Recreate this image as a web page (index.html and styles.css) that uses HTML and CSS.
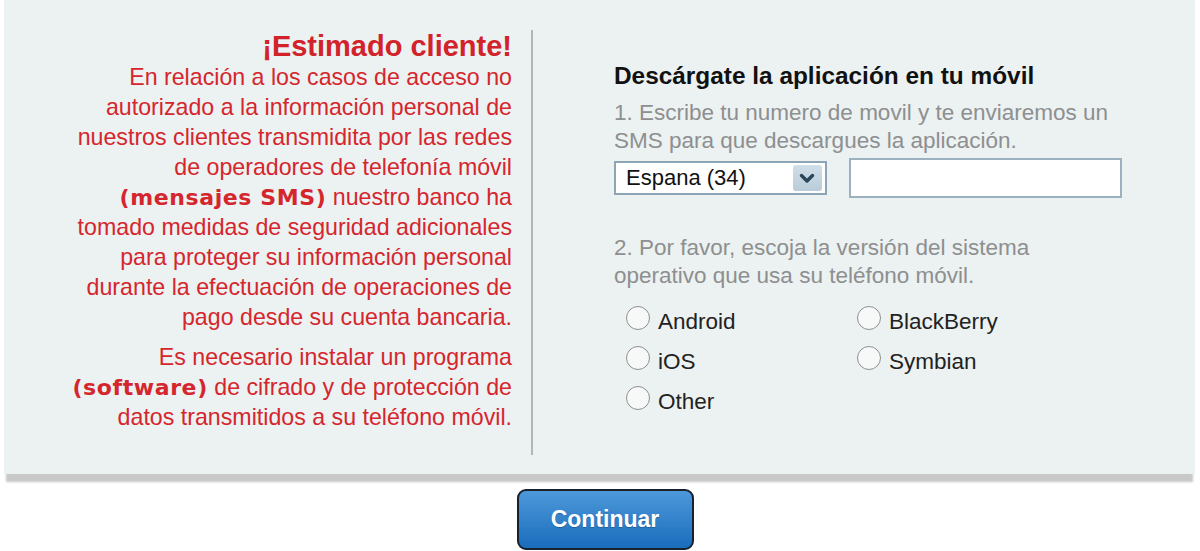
FILE: index.html
```html
<!DOCTYPE html>
<html lang="es">
<head>
    <meta charset="UTF-8">
    <meta name="viewport" content="width=device-width, initial-scale=1.0">
    <title>Descarga la aplicación</title>
    <link rel="stylesheet" href="styles.css">
</head>
<body>
    <div class="panel">
        <!-- Aviso al cliente -->
        <div class="notice">
            <h1>¡Estimado cliente!</h1>
            <p>En relación a los casos de acceso no<br>
            autorizado a la información personal de<br>
            nuestros clientes transmidita por las redes<br>
            de operadores de telefonía móvil<br>
            <strong>(mensajes SMS)</strong> nuestro banco ha<br>
            tomado medidas de seguridad adicionales<br>
            para proteger su información personal<br>
            durante la efectuación de operaciones de<br>
            pago desde su cuenta bancaria.</p>
            <p>Es necesario instalar un programa<br>
            <strong>(software)</strong> de cifrado y de protección de<br>
            datos transmitidos a su teléfono móvil.</p>
        </div>

        <!-- Formulario de descarga -->
        <div class="download">
            <h2>Descárgate la aplicación en tu móvil</h2>
            <p class="step">1. Escribe tu numero de movil y te enviaremos un SMS para que descargues la aplicación.</p>

            <div class="phone-row">
                <div class="country-select">
                    <span>Espana (34)</span>
                    <span class="select-arrow">
                        <svg width="18" height="14" viewBox="0 0 18 14"><path d="M3.5 4.5 L9 10 L14.5 4.5" fill="none" stroke="#2a465a" stroke-width="3.4" stroke-linecap="round" stroke-linejoin="round"/></svg>
                    </span>
                </div>
                <input type="text" class="phone-input">
            </div>

            <p class="step step-os">2. Por favor, escoja la versión del sistema operativo que usa su teléfono móvil.</p>

            <div class="os-options">
                <label class="os-option"><input type="radio" name="os"> Android</label>
                <label class="os-option"><input type="radio" name="os"> BlackBerry</label>
                <label class="os-option"><input type="radio" name="os"> iOS</label>
                <label class="os-option"><input type="radio" name="os"> Symbian</label>
                <label class="os-option"><input type="radio" name="os"> Other</label>
            </div>
        </div>
    </div>

    <div class="actions">
        <button type="button" class="continue-button">Continuar</button>
    </div>
</body>
</html>
```

FILE: styles.css
```css
/* Basic page styling */
body {
    font-family: "Liberation Sans", Arial, sans-serif;
    margin: 0;
    background: #ffffff;
}

/* Main grey panel */
.panel {
    display: flex;
    margin: 0 5px 0 4px;
    padding: 30px 0 19px;
    background: #ecf1f1;
    box-shadow: 0 10px 2px -2px #c8c8c8;
}

/* Left column - red notice */
.notice {
    width: 470px;
    margin-left: 38px;
    padding: 0 19px 23px 0;
    border-right: 2px solid #b3b6b6;
    text-align: right;
    white-space: nowrap;
    color: #d5262d;
}

.notice h1 {
    margin: 0;
    font-size: 29px;
    line-height: 32px;
    color: #d2222a;
}

.notice p {
    margin: 0;
    font-size: 23.2px;
    line-height: 30px;
}

.notice p + p {
    margin-top: 10px;
}

.notice strong {
    font-family: "DejaVu Sans", Verdana, sans-serif;
    font-size: 22px;
    line-height: 1;
    letter-spacing: 0.6px;
}

/* Right column - download form */
.download {
    width: 508px;
    padding: 31px 0 0 81px;
}

.download h2 {
    margin: 0;
    font-size: 24.4px;
    line-height: 30px;
    color: #111;
}

.step {
    margin: 8px 0 0 0;
    font-size: 22.5px;
    line-height: 28px;
    color: #8d8f90;
}

.step-os {
    margin-top: 36px;
}

.phone-row {
    display: flex;
    align-items: center;
    gap: 22px;
    margin-top: 3px;
}

.country-select {
    display: flex;
    align-items: center;
    justify-content: space-between;
    box-sizing: border-box;
    width: 213px;
    height: 34px;
    padding: 0 3px 0 10px;
    background: #fff;
    border: 2px solid #8ea5b5;
    font-size: 22px;
    color: #111;
}

.select-arrow {
    display: flex;
    align-items: center;
    justify-content: center;
    width: 29px;
    height: 26px;
    border-radius: 3px;
    background: linear-gradient(#d0dee8, #b9ccd9);
}

.phone-input {
    width: 274px;
    height: 40px;
    box-sizing: border-box;
    border: 2px solid #9cb1c0;
    background: #fff;
    font-size: 20px;
}

/* Operating system radios */
.os-options {
    display: grid;
    grid-template-columns: 231px 231px;
    margin: 12px 0 0 12px;
}

.os-option {
    display: flex;
    align-items: center;
    height: 40px;
    font-size: 22.5px;
    color: #222;
}

.os-option input {
    appearance: none;
    width: 24px;
    height: 24px;
    margin: 0 8px 9px 0;
    border: 1.5px solid #8e9090;
    border-radius: 50%;
    background: #f7f9f9;
    box-sizing: border-box;
}

/* Continue button */
.actions {
    display: flex;
    justify-content: center;
    padding: 15px 0 0 10px;
}

.continue-button {
    width: 177px;
    height: 61px;
    border: 2px solid #18212c;
    border-radius: 9px;
    background: linear-gradient(#4d98d9, #1a6dbd);
    color: white;
    font-family: "Liberation Sans", Arial, sans-serif;
    font-size: 23px;
    font-weight: bold;
    text-shadow: 0 1px 1px rgba(0,0,0,0.25);
    cursor: pointer;
}
```
